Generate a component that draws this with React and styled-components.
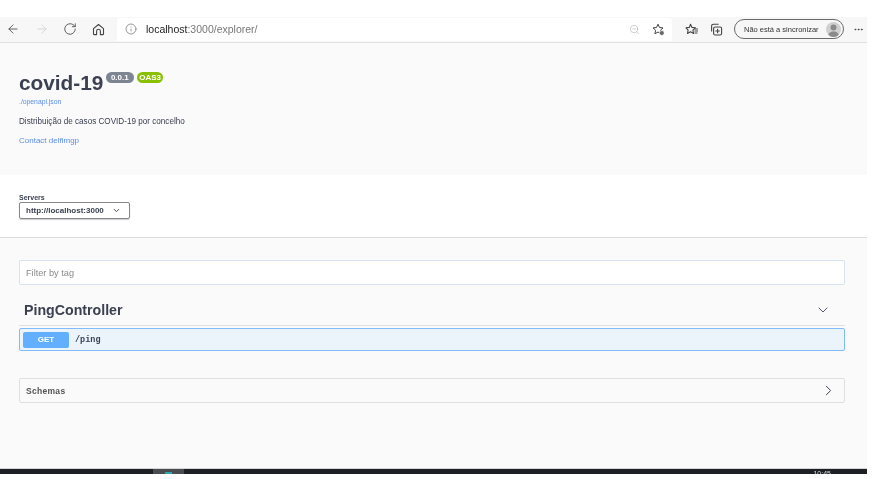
import React from 'react'
import styled, { createGlobalStyle } from 'styled-components'
import { ArrowLeft, ArrowRight, RotateCw, Info, ZoomOut, ChevronDown, ChevronRight, Ellipsis } from 'lucide-react'

const GlobalStyle = createGlobalStyle`
  html, body { margin: 0; padding: 0; background: #fff; }
  body { font-family: "Liberation Sans", Arial, sans-serif; color: #3b4151; }
  * { box-sizing: border-box; }
`

const Page = styled.div`
  width: 875px;
  height: 479px;
  overflow: hidden;
  padding: 17px 8px 0 0;
  filter: blur(0.5px);
`

const Window = styled.div`
  height: 457px;
  display: flex;
  flex-direction: column;
  background: #fafafa;
`

const Toolbar = styled.div`
  height: 26px;
  flex: none;
  display: flex;
  align-items: center;
  padding: 0 0 1px 6px;
  background: #f7f7f7;
  border-bottom: 1px solid #e2e2e2;
  color: #555;
`

const NavButton = styled.span`
  display: flex;
  width: 14px;
  flex: none;
  margin-right: ${props => props.$gap}px;
  justify-content: center;
  color: ${props => props.$muted ? '#cfcfcf' : '#444'};
`

const AddressBar = styled.div`
  width: 555px;
  height: 23px;
  flex: none;
  margin-left: 12px;
  padding: 0 7px 0 8px;
  display: flex;
  align-items: center;
  background: #fff;
  border-radius: 3px 3px 0 0;
`

const Url = styled.span`
  margin-left: 9px;
  flex: 1;
  font-size: 10.5px;
  color: #777;
`

const Host = styled.span`
  color: #222;
`

const ToolIcons = styled.div`
  display: flex;
  align-items: center;
  gap: ${props => props.$gap}px;
  margin-left: ${props => props.$left}px;
  color: #444;
`

const SyncPill = styled.div`
  width: 110px;
  height: 20px;
  flex: none;
  margin-left: 11px;
  padding: 0 2px 0 9px;
  display: flex;
  align-items: center;
  justify-content: space-between;
  border: 1px solid #6a6a6a;
  border-radius: 10px;
  font-size: 7.5px;
  color: #333;
`

const Avatar = styled.span`
  width: 15px;
  height: 15px;
  border-radius: 50%;
  display: flex;
  overflow: hidden;
  background: #cfcfcf;
`

const More = styled.span`
  display: flex;
  margin-left: 9px;
  color: #444;
`

const InfoSection = styled.section`
  height: 132px;
  flex: none;
  padding: 27px 19px 0;
`

const TitleRow = styled.div`
  display: flex;
  align-items: flex-start;
  height: 26px;
`

const Title = styled.h1`
  margin: 0 2.5px 0 0;
  font-size: 20.8px;
  line-height: 26px;
  font-weight: 700;
`

const Badge = styled.span`
  height: 11px;
  margin: 2px 3px 0 0;
  padding: 0 ${props => props.$pad}px;
  border-radius: 6px;
  background: ${props => props.$color};
  color: #fff;
  font-size: 8px;
  line-height: 11px;
  font-weight: 700;
`

const SpecLink = styled.a`
  display: block;
  margin-top: 2px;
  font-size: 6.8px;
  line-height: 8px;
  color: #5b8de8;
`

const Description = styled.p`
  margin: 11px 0 0;
  font-size: 8.15px;
  line-height: 10px;
`

const ContactLink = styled.a`
  display: block;
  margin-top: 9px;
  font-size: 8px;
  line-height: 10px;
  color: #5b8de8;
`

const ServerSection = styled.section`
  height: 63px;
  flex: none;
  padding: 19px 19px 0;
  background: #fff;
  border-bottom: 1px solid #dcdcdc;
`

const ServerLabel = styled.div`
  font-size: 7px;
  line-height: 8px;
  font-weight: 700;
`

const ServerSelect = styled.div`
  width: 111px;
  height: 17px;
  padding: 0 8px 0 6px;
  display: flex;
  align-items: center;
  justify-content: space-between;
  border: 1.5px solid #85878c;
  border-radius: 2px;
  box-shadow: 0 1px 1px rgba(0, 0, 0, 0.2);
  font-size: 8px;
  font-weight: 700;
`

const Content = styled.main`
  flex: 1;
  padding: 22px 22px 0 19px;
`

const FilterInput = styled.div`
  height: 25px;
  padding: 0 6px;
  display: flex;
  align-items: center;
  background: #fff;
  border: 1px solid #d8e3f3;
  border-radius: 2px;
  font-size: 9.2px;
  color: #8a8a8a;
`

const TagHeader = styled.div`
  height: 41px;
  padding: 10px 14px 0 5px;
  display: flex;
  align-items: center;
  justify-content: space-between;
  border-bottom: 1px solid #dedfe1;
  font-size: 14.2px;
  font-weight: 700;
  color: #3b4151;
`

const OperationRow = styled.div`
  height: 23px;
  margin-top: 2px;
  padding: 0 3px;
  display: flex;
  align-items: center;
  background: #ebf3fb;
  border: 1px solid #80bcf9;
  border-radius: 2px;
`

const MethodTag = styled.span`
  width: 46px;
  height: 16px;
  display: flex;
  align-items: center;
  justify-content: center;
  border-radius: 2px;
  background: #61affe;
  color: #fff;
  font-size: 8px;
  font-weight: 700;
`

const OperationPath = styled.span`
  margin-left: 6px;
  font-family: "Liberation Mono", monospace;
  font-size: 8.5px;
  font-weight: 700;
`

const SchemasBox = styled.div`
  height: 25px;
  margin-top: 27px;
  padding: 0 7px 0 6px;
  display: flex;
  align-items: center;
  justify-content: space-between;
  border: 1px solid #dfdfdf;
  border-radius: 2px;
  font-size: 8.5px;
  font-weight: 700;
  letter-spacing: 0.3px;
  color: #555;
`

const Taskbar = styled.div`
  height: 6px;
  flex: none;
  display: flex;
  overflow: hidden;
  background: #1d2024;
  border-top: 1px solid #d5d5d5;
`

const TaskbarSlot = styled.span`
  width: 31px;
  margin-left: 153px;
  display: flex;
  justify-content: center;
  padding-top: 3px;
  background: #4a4d50;
`

const TaskbarMark = styled.span`
  width: 7px;
  height: 2px;
  background: ${props => props.$color};
`

const Clock = styled.span`
  margin-left: auto;
  margin-right: 36px;
  padding-top: 1px;
  font-size: 7px;
  line-height: 8px;
  color: #ddd;
`

const FavoriteAddIcon = () => (
  <svg width="13" height="13" viewBox="0 0 13 13" fill="none" stroke="currentColor" strokeWidth="1" strokeLinejoin="round">
    <path d="M6 1.2 7.5 4.5l3.5.4-2.6 2.4.7 3.5L6 9l-3.1 1.8.7-3.5L1 4.9l3.5-.4z" />
    <circle cx="9.8" cy="10" r="2.4" fill="#666" stroke="#fff" strokeWidth="0.6" />
  </svg>
)

const FavoritesIcon = () => (
  <svg width="14" height="13" viewBox="0 0 14 13" fill="none" stroke="currentColor" strokeWidth="1.1" strokeLinejoin="round">
    <path d="M5.5 1.2 7 4.4l3.4.4-2.5 2.3.7 3.4-3.1-1.7-3 1.7.6-3.4L1 4.8l3.4-.4z" />
    <path d="M9.5 6h3.5M9.5 8h3.5M9.5 10h3" />
  </svg>
)

const CollectionsIcon = () => (
  <svg width="13" height="13" viewBox="0 0 13 13" fill="none" stroke="currentColor" strokeWidth="1.1">
    <path d="M1.6 8.5V3.2C1.6 2 2.4 1.3 3.6 1.3h5" />
    <rect x="3.6" y="4" width="8" height="8" rx="1.6" />
    <path d="M7.6 5.8v4.4M5.4 8h4.4" />
  </svg>
)

const EdgeHomeIcon = () => (
  <svg width="13" height="13" viewBox="0 0 13 13" fill="none" stroke="currentColor" strokeWidth="1.1" strokeLinejoin="round">
    <path d="M6.5 1.5 11.5 5.6V11a.6.6 0 0 1-.6.6H8.4V8.2a1.9 1.9 0 0 0-3.8 0v3.4H2.1a.6.6 0 0 1-.6-.6V5.6z" />
  </svg>
)

const AvatarFigure = () => (
  <svg width="15" height="15" viewBox="0 0 15 15" fill="#8a8a8a">
    <circle cx="7.5" cy="5.6" r="3" />
    <path d="M2 15c0-3.6 2.4-5.4 5.5-5.4S13 11.4 13 15z" />
  </svg>
)

const App = () => {
  return (
    <Page>
      <GlobalStyle />
      <Window>
        <Toolbar>
          <NavButton $gap={15}><ArrowLeft size={16} strokeWidth={1.4} /></NavButton>
          <NavButton $gap={14} $muted><ArrowRight size={16} strokeWidth={1.4} /></NavButton>
          <NavButton $gap={14}><RotateCw size={14} strokeWidth={1.4} /></NavButton>
          <NavButton $gap={0}><EdgeHomeIcon /></NavButton>
          <AddressBar>
            <Info size={12} strokeWidth={1.2} color="#555" />
            <Url><Host>localhost</Host>:3000/explorer/</Url>
            <ZoomOut size={11} strokeWidth={1} color="#999" />
            <ToolIcons $left={12} $gap={0}>
              <FavoriteAddIcon />
            </ToolIcons>
          </AddressBar>
          <ToolIcons $left={13} $gap={11}>
            <FavoritesIcon />
            <CollectionsIcon />
          </ToolIcons>
          <SyncPill>
            Não está a sincronizar
            <Avatar><AvatarFigure /></Avatar>
          </SyncPill>
          <More><Ellipsis size={11} strokeWidth={2} /></More>
        </Toolbar>

        <InfoSection>
          <TitleRow>
            <Title>covid-19</Title>
            <Badge $color="#7d8492" $pad={5}>0.0.1</Badge>
            <Badge $color="#89bf04" $pad={2.5}>OAS3</Badge>
          </TitleRow>
          <SpecLink>./openapi.json</SpecLink>
          <Description>Distribuição de casos COVID-19 por concelho</Description>
          <ContactLink>Contact delfimgp</ContactLink>
        </InfoSection>

        <ServerSection>
          <ServerLabel>Servers</ServerLabel>
          <ServerSelect>
            http://localhost:3000
            <ChevronDown size={9} strokeWidth={2.4} />
          </ServerSelect>
        </ServerSection>

        <Content>
          <FilterInput>Filter by tag</FilterInput>
          <TagHeader>
            PingController
            <ChevronDown size={16} strokeWidth={1.3} />
          </TagHeader>
          <OperationRow>
            <MethodTag>GET</MethodTag>
            <OperationPath>/ping</OperationPath>
          </OperationRow>
          <SchemasBox>
            Schemas
            <ChevronRight size={17} strokeWidth={1.4} color="#3b4151" />
          </SchemasBox>
        </Content>

        <Taskbar>
          <TaskbarSlot><TaskbarMark $color="#2aa7b0" /></TaskbarSlot>
          <Clock>10:45</Clock>
        </Taskbar>
      </Window>
    </Page>
  )
}

export default App
